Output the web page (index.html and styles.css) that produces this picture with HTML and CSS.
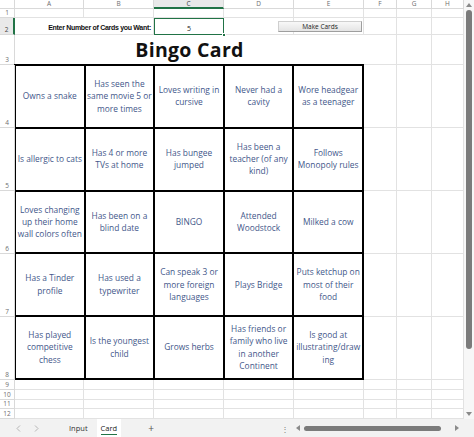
FILE: index.html
```html
<!DOCTYPE html>
<html>
<head>
<meta charset="utf-8">
<link rel="stylesheet" href="styles.css">
</head>
<body>
<div class="app">
  <div class="main">
    <div class="sheet">
      <div class="hd corner"></div>
      <div class="hd col">A</div>
      <div class="hd col">B</div>
      <div class="hd col sel">C</div>
      <div class="hd col">D</div>
      <div class="hd col">E</div>
      <div class="hd col">F</div>
      <div class="hd col">G</div>
      <div class="hd col">H</div>

      <div class="hd row">1</div>
      <div class="c"></div><div class="c"></div><div class="c"></div><div class="c"></div><div class="c"></div><div class="c"></div><div class="c"></div><div class="c"></div>

      <div class="hd row sel">2</div>
      <div class="c label">Enter Number of Cards you Want:</div>
      <div class="c active">5<span class="handle"></span></div>
      <div class="c"></div><div class="c"></div><div class="c"></div><div class="c"></div><div class="c"></div>

      <div class="hd row">3</div>
      <div class="c title">Bingo Card</div>
      <div class="c"></div><div class="c"></div><div class="c"></div>

      <div class="bingo">
        <div class="sq">Owns a snake</div>
        <div class="sq">Has seen the same movie 5 or more times</div>
        <div class="sq">Loves writing in cursive</div>
        <div class="sq">Never had a cavity</div>
        <div class="sq">Wore headgear as a teenager</div>

        <div class="sq">Is allergic to cats</div>
        <div class="sq">Has 4 or more TVs at home</div>
        <div class="sq">Has bungee jumped</div>
        <div class="sq">Has been a teacher (of any kind)</div>
        <div class="sq">Follows Monopoly rules</div>

        <div class="sq">Loves changing up their home wall colors often</div>
        <div class="sq">Has been on a blind date</div>
        <div class="sq">BINGO</div>
        <div class="sq">Attended Woodstock</div>
        <div class="sq">Milked a cow</div>

        <div class="sq">Has a Tinder profile</div>
        <div class="sq">Has used a typewriter</div>
        <div class="sq">Can speak 3 or more foreign languages</div>
        <div class="sq">Plays Bridge</div>
        <div class="sq">Puts ketchup on most of their food</div>

        <div class="sq">Has played competitive chess</div>
        <div class="sq">Is the youngest child</div>
        <div class="sq">Grows herbs</div>
        <div class="sq">Has friends or family who live in another Continent</div>
        <div class="sq">Is good at<br>illustrating/draw<br>ing</div>
      </div>

      <div class="hd row">4</div><div class="c"></div><div class="c"></div><div class="c"></div>
      <div class="hd row">5</div><div class="c"></div><div class="c"></div><div class="c"></div>
      <div class="hd row">6</div><div class="c"></div><div class="c"></div><div class="c"></div>
      <div class="hd row">7</div><div class="c"></div><div class="c"></div><div class="c"></div>
      <div class="hd row">8</div><div class="c"></div><div class="c"></div><div class="c"></div>

      <div class="hd row">9</div>
      <div class="c"></div><div class="c"></div><div class="c"></div><div class="c"></div><div class="c"></div><div class="c"></div><div class="c"></div><div class="c"></div>
      <div class="hd row">10</div>
      <div class="c"></div><div class="c"></div><div class="c"></div><div class="c"></div><div class="c"></div><div class="c"></div><div class="c"></div><div class="c"></div>
      <div class="hd row">11</div>
      <div class="c"></div><div class="c"></div><div class="c"></div><div class="c"></div><div class="c"></div><div class="c"></div><div class="c"></div><div class="c"></div>
      <div class="hd row">12</div>
      <div class="c"></div><div class="c"></div><div class="c"></div><div class="c"></div><div class="c"></div><div class="c"></div><div class="c"></div><div class="c"></div>

      <button class="make-btn">Make Cards</button>
    </div>
    <div class="vscroll">
      <svg class="arr" width="6" height="4" viewBox="0 0 6 4"><path d="M0 4 L3 0 L6 4 Z" fill="#8a8a8a"/></svg>
      <div class="vthumb"></div>
      <div class="vspace"></div>
      <svg class="arr" width="6" height="4" viewBox="0 0 6 4"><path d="M0 0 L3 4 L6 0 Z" fill="#8a8a8a"/></svg>
    </div>
  </div>
  <div class="tabbar">
    <span class="nav"><svg width="5" height="7" viewBox="0 0 5 7"><path d="M4 0.5 L1 3.5 L4 6.5" fill="none" stroke="#b5b5b5" stroke-width="1"/></svg></span>
    <span class="nav"><svg width="5" height="7" viewBox="0 0 5 7"><path d="M1 0.5 L4 3.5 L1 6.5" fill="none" stroke="#b5b5b5" stroke-width="1"/></svg></span>
    <span class="tab">Input</span>
    <span class="tab current"><span class="tname">Card</span></span>
    <span class="plus">+</span>
    <span class="dots">⋮</span>
    <div class="hscroll">
      <svg width="4" height="6" viewBox="0 0 4 6"><path d="M4 0 L0 3 L4 6 Z" fill="#8a8a8a"/></svg>
      <div class="hthumb"></div>
      <svg width="4" height="6" viewBox="0 0 4 6"><path d="M0 0 L4 3 L0 6 Z" fill="#8a8a8a"/></svg>
    </div>
  </div>
</div>
</body>
</html>
```

FILE: styles.css
```css
* { box-sizing: border-box; }
html, body {
  margin: 0;
  padding: 0;
  background: #fff;
}
body {
  width: 474px;
  height: 437px;
  overflow: hidden;
  font-family: "Open Sans", "Liberation Sans", sans-serif;
}
.app {
  width: 474px;
  height: 437px;
  display: flex;
  flex-direction: column;
}
.main {
  display: flex;
  height: 419px;
}
.sheet {
  position: relative;
  display: grid;
  grid-template-columns: 15px 69px 70px 70px 70px 70px 33px 35px 32px;
  grid-template-rows: 9px 9px 17px 30px 63px 63px 63px 63px 63px 10px 10px 9px 10px;
  width: 464px;
  height: 419px;
}
.c {
  border-right: 1px solid #e2e2e2;
  border-bottom: 1px solid #e2e2e2;
}
.hd {
  background: #fff;
  color: #6e6e6e;
  font-size: 6.5px;
  border-right: 1px solid #d9d9d9;
  border-bottom: 1px solid #d9d9d9;
  display: flex;
  justify-content: center;
  line-height: 8px;
}
.hd.col {
  align-items: center;
}
.hd.col.sel {
  background: #e9e9e9;
  border-bottom: 2px solid #217346;
  color: #444;
}
.hd.row {
  align-items: flex-end;
  padding-bottom: 0;
  font-size: 6.5px;
}
.hd.row.sel {
  background: #e9e9e9;
  border-right: 2px solid #217346;
  color: #444;
}
.label {
  grid-column: span 2;
  display: flex;
  align-items: flex-end;
  justify-content: flex-end;
  padding: 0 2px 2px 0;
  font-family: "Liberation Sans", sans-serif;
  font-weight: bold;
  font-size: 7px;
  letter-spacing: -0.3px;
  line-height: 9px;
  color: #111;
  white-space: nowrap;
}
.active {
  position: relative;
  border: 1.5px solid #217346;
  display: flex;
  align-items: flex-end;
  justify-content: center;
  padding-bottom: 1px;
  font-size: 7px;
  line-height: 9px;
  color: #222;
}
.handle {
  position: absolute;
  right: -3px;
  bottom: -3px;
  width: 4px;
  height: 4px;
  background: #217346;
  border: 1px solid #fff;
}
.title {
  grid-column: span 5;
  border-right: none;
  display: flex;
  align-items: flex-end;
  justify-content: center;
  padding-bottom: 5px;
  font-weight: bold;
  font-size: 19.5px;
  letter-spacing: 0.3px;
  line-height: 19.5px;
  color: #111;
}
.bingo {
  grid-column: 2 / 7;
  grid-row: 5 / 10;
  margin: -1px 0 0 -1px;
  display: grid;
  grid-template-columns: repeat(5, 1fr);
  grid-template-rows: repeat(5, 1fr);
  gap: 2px;
  background: #000;
  border: 2px solid #000;
}
.sq {
  background: #fff;
  display: flex;
  align-items: center;
  justify-content: center;
  text-align: center;
  padding: 0 1px;
  font-size: 8.4px;
  line-height: 12.3px;
  color: #43578a;
}
.make-btn {
  position: absolute;
  left: 278px;
  top: 21px;
  width: 84px;
  height: 11px;
  padding: 0;
  margin: 0;
  font-family: "Open Sans", sans-serif;
  font-size: 6.5px;
  line-height: 9px;
  color: #222;
  background: linear-gradient(#f8f8f8, #e4e4e4);
  border: 1px solid #cfcfcf;
  border-right-color: #9e9e9e;
  border-bottom-color: #9e9e9e;
  border-radius: 0;
}
.vscroll {
  width: 10px;
  height: 419px;
  background: #f7f7f7;
  display: flex;
  flex-direction: column;
  align-items: center;
  padding-top: 3px;
  padding-bottom: 3px;
}
.vscroll .arr { flex: none; }
.vthumb {
  width: 6px;
  height: 339px;
  margin-top: 3px;
  background: #7b7b7b;
  border-radius: 3px;
}
.vspace { flex: 1; }
.tabbar {
  height: 18px;
  background: #f2f2f2;
  display: flex;
  align-items: stretch;
  font-size: 7.5px;
  color: #333;
}
.nav {
  width: 18px;
  display: flex;
  align-items: center;
  justify-content: center;
}
.nav:first-child { margin-left: 9px; }
.tab {
  display: flex;
  align-items: center;
  padding: 0 7px;
  margin-left: 17px;
}
.tab.current {
  margin-left: 2px;
  padding: 0 4px;
  background: #fff;
  color: #222;
}
.tname {
  padding-bottom: 1px;
  border-bottom: 1.5px solid #217346;
  line-height: 9px;
  margin-top: 2px;
}
.plus {
  display: flex;
  align-items: center;
  justify-content: center;
  width: 10px;
  margin-left: 25px;
  font-size: 10px;
  color: #555;
}
.dots {
  display: flex;
  align-items: center;
  justify-content: center;
  width: 6px;
  margin-left: 126px;
  font-size: 8px;
  color: #777;
}
.hscroll {
  flex: 1;
  display: flex;
  align-items: center;
  padding: 0 12px 0 8px;
}
.hthumb {
  height: 5px;
  flex: none;
  width: 137px;
  margin: 0 14px 0 4px;
  background: #7b7b7b;
  border-radius: 3px;
}
```
